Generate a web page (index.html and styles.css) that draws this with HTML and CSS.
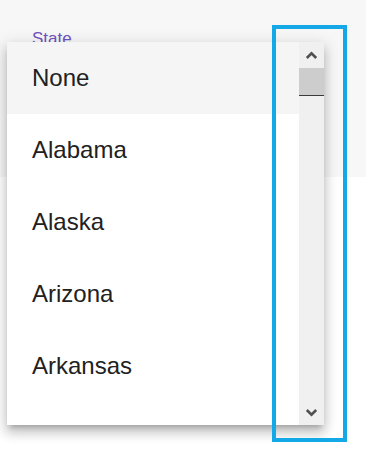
FILE: index.html
```html
<!DOCTYPE html>
<html>
<head>
<meta charset="utf-8">
<link rel="stylesheet" href="styles.css">
</head>
<body>
<div class="page">
  <div class="field">
    <span class="label">State</span>
  </div>
  <div class="menu">
    <ul class="list">
      <li class="item selected">None</li>
      <li class="item">Alabama</li>
      <li class="item">Alaska</li>
      <li class="item">Arizona</li>
      <li class="item">Arkansas</li>
    </ul>
    <div class="scrollbar">
      <div class="btn">
        <svg width="13" height="9" viewBox="0 0 13 9"><polyline points="1.8,7 6.5,2.3 11.2,7" fill="none" stroke="#505050" stroke-width="2.6"/></svg>
      </div>
      <div class="thumb"></div>
      <div class="track"></div>
      <div class="btn">
        <svg width="13" height="9" viewBox="0 0 13 9"><polyline points="1.8,2 6.5,6.7 11.2,2" fill="none" stroke="#505050" stroke-width="2.6"/></svg>
      </div>
    </div>
  </div>
  <div class="highlight"></div>
</div>
</body>
</html>
```
FILE: styles.css
```css
html, body {
  margin: 0;
  padding: 0;
  background: #ffffff;
}
.page {
  position: relative;
  width: 366px;
  height: 452px;
  overflow: hidden;
  font-family: "Liberation Sans", Arial, sans-serif;
}
.field {
  height: 177px;
  background: #f7f7f7;
  padding: 29px 0 0 32px;
  box-sizing: border-box;
}
.label {
  font-size: 17px;
  line-height: 20px;
  color: #6f52c1;
}
.menu {
  position: absolute;
  left: 7px;
  top: 42px;
  width: 317px;
  height: 383px;
  background: #ffffff;
  display: flex;
  box-shadow: 0 5px 5px -3px rgba(0,0,0,0.2), 0 8px 10px 1px rgba(0,0,0,0.14), 0 3px 14px 2px rgba(0,0,0,0.12);
}
.list {
  flex: 1;
  margin: 0;
  padding: 0;
  list-style: none;
  overflow: hidden;
}
.item {
  height: 72px;
  line-height: 72px;
  padding-left: 25px;
  font-size: 24px;
  color: #212121;
}
.item.selected {
  background: #f5f5f5;
}
.scrollbar {
  width: 25px;
  background: #f0f0f0;
  display: flex;
  flex-direction: column;
}
.btn {
  height: 26px;
  display: flex;
  align-items: center;
  justify-content: center;
}
.thumb {
  height: 27px;
  background: #cdcdcd;
  border-bottom: 1px solid #3a3a3a;
}
.track {
  flex: 1;
}
.highlight {
  position: absolute;
  left: 272px;
  top: 25px;
  width: 67px;
  height: 409px;
  border: 4px solid #14a8e6;
}
```
